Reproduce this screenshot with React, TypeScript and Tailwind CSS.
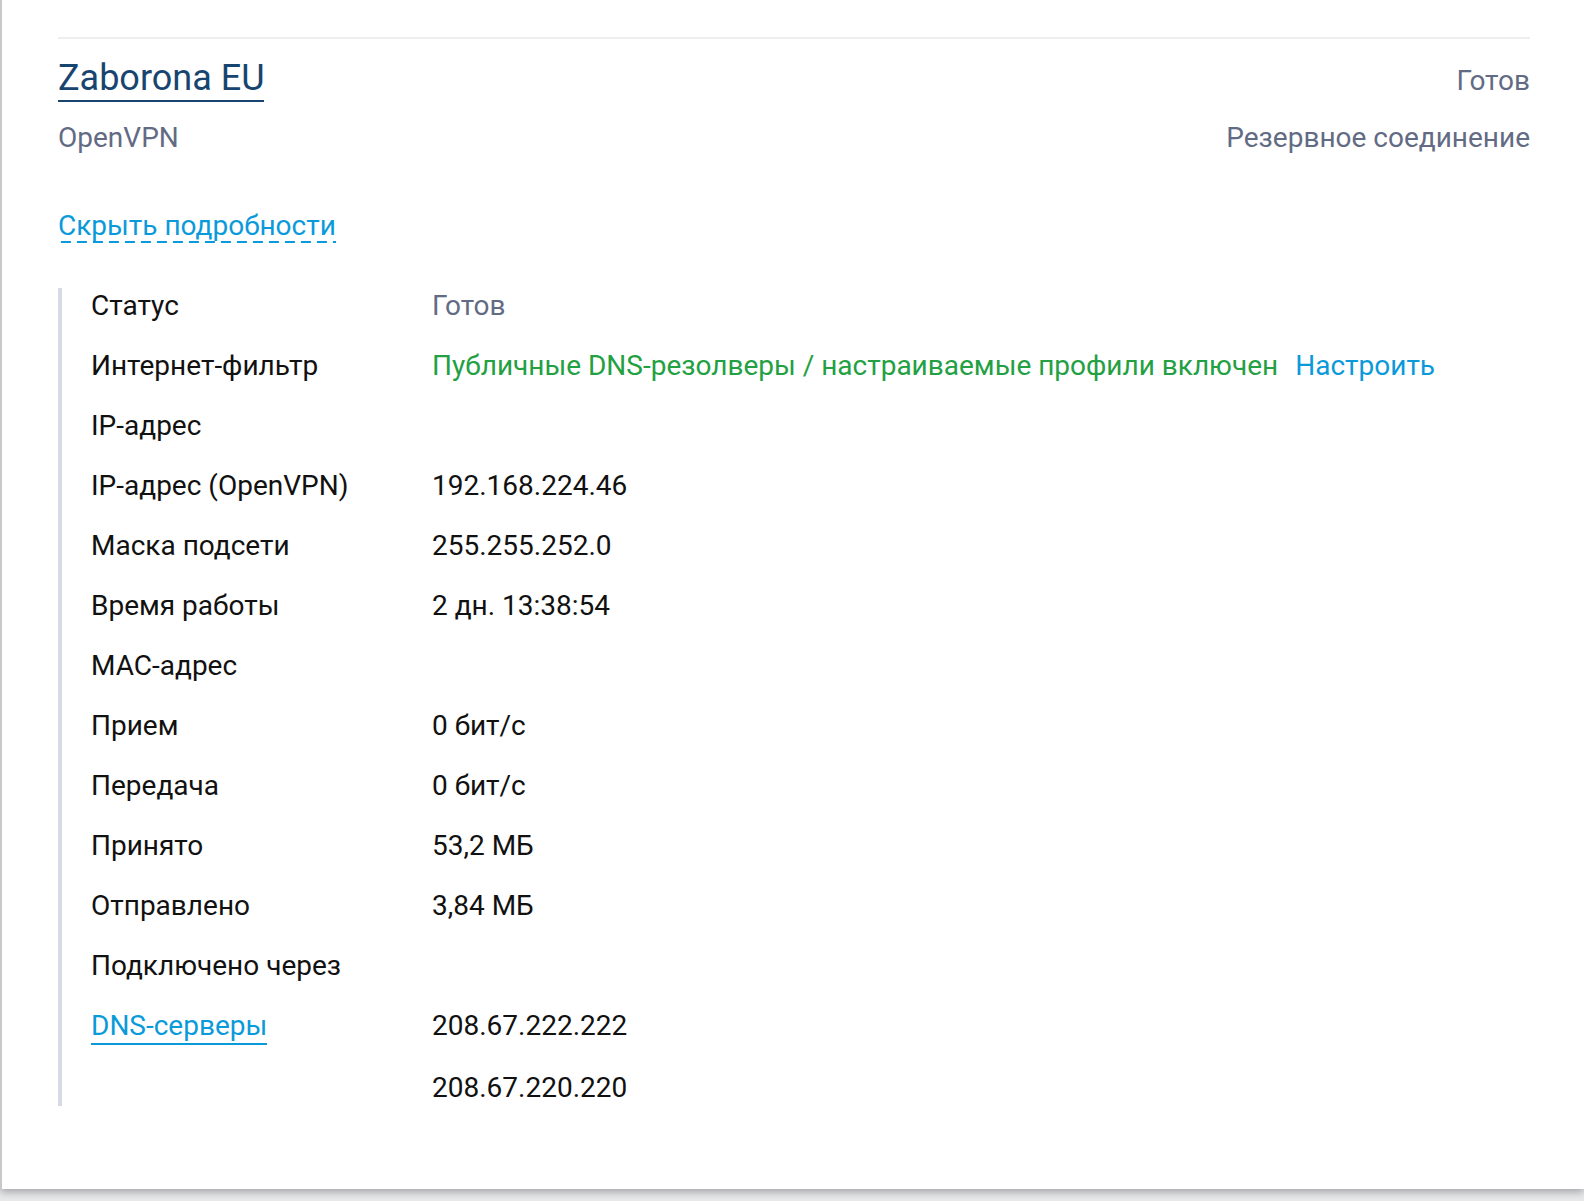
import React from "react";

const rows: { label: string; value?: React.ReactNode; link?: boolean }[] = [
  { label: "Статус", value: <span className="text-[#626b83]">Готов</span> },
  {
    label: "Интернет-фильтр",
    value: (
      <span className="flex gap-[17px]">
        <span className="text-[#22a042]">Публичные DNS-резолверы / настраиваемые профили включен</span>
        <span className="text-[#0b9ad9]">Настроить</span>
      </span>
    ),
  },
  { label: "IP-адрес" },
  { label: "IP-адрес (OpenVPN)", value: "192.168.224.46" },
  { label: "Маска подсети", value: "255.255.252.0" },
  { label: "Время работы", value: "2 дн. 13:38:54" },
  { label: "MAC-адрес" },
  { label: "Прием", value: "0 бит/с" },
  { label: "Передача", value: "0 бит/с" },
  { label: "Принято", value: "53,2 МБ" },
  { label: "Отправлено", value: "3,84 МБ" },
  { label: "Подключено через" },
  { label: "DNS-серверы", value: "208.67.222.222", link: true },
];

export default function App() {
  return (
    <div className="min-h-screen bg-[#e8e9eb]" style={{ fontFamily: "Roboto, 'Liberation Sans', sans-serif" }}>
      <div className="h-[1189px] bg-white border-l-2 border-[#c8c8c8] shadow-[0_3px_8px_rgba(0,0,0,0.3)] pl-[56px] pr-[54px] pt-[37px]">
        <div className="border-t-2 border-[#eeeeee]" />
        <div className="flex items-baseline justify-between mt-[18px]">
          <span className="text-[36px] leading-[43px] text-[#18456f] border-b-2 border-[#18456f]">Zaborona EU</span>
          <span className="text-[28px] text-[#626b83]">Готов</span>
        </div>
        <div className="flex justify-between mt-[18px] text-[28px] leading-[36px] text-[#626b83]">
          <span>OpenVPN</span>
          <span>Резервное соединение</span>
        </div>
        <div className="mt-[52px]">
          <span className="inline-block text-[28px] leading-[35px] text-[#0b9ad9] bg-[linear-gradient(to_right,#0b9ad9_60%,transparent_60%)] bg-[length:16px_2px] bg-repeat-x bg-bottom">
            Скрыть подробности
          </span>
        </div>
        <div className="mt-[45px] border-l-4 border-[#d5dbe4] pl-[29px] flex flex-col gap-[24px] text-[28px] leading-[36px] text-[#111111]">
          {rows.map((r) => (
            <div key={r.label} className="grid grid-cols-[341px_1fr]">
              <div>
                {r.link ? (
                  <span className="inline-block leading-[34px] text-[#0b9ad9] border-b-2 border-[#0b9ad9]">{r.label}</span>
                ) : (
                  r.label
                )}
              </div>
              <div>{r.value}</div>
            </div>
          ))}
          <div className="grid grid-cols-[341px_1fr] mt-[1px]">
            <div />
            <div>208.67.220.220</div>
          </div>
        </div>
      </div>
    </div>
  );
}
